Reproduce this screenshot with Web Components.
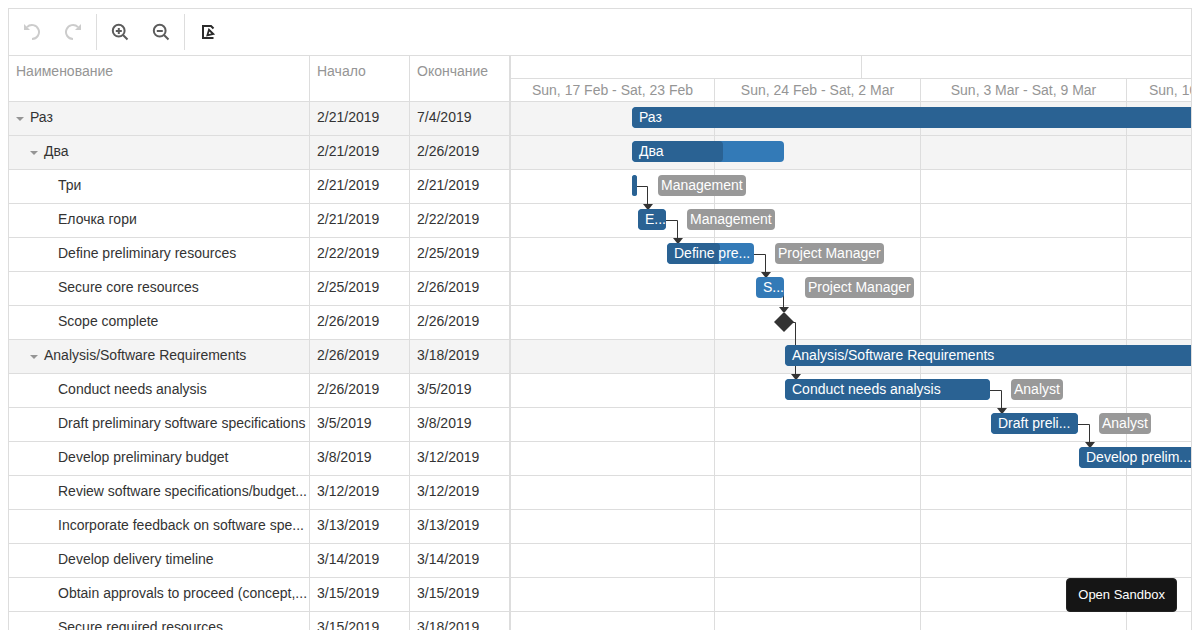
<!DOCTYPE html>
<html lang="ru">
<head>
<meta charset="utf-8">
<meta name="viewport" content="width=device-width, initial-scale=1">
<title>Gantt</title>
<style>
  html, body { height: 100%; margin: 0; }
  body {
    box-sizing: border-box;
    padding: 8px 8px 0;
    overflow: hidden;
    background: #fff;
    color: #333;
    font: 14px/18px "Liberation Sans", Arial, sans-serif;
    --line: #ddd;
    --muted: #959595;
    --row: 34px;
    --head: 46px;
    --group: #f4f4f4;
    --accent: #337ab7;
    --accent-done: #2a6293;
  }
</style>
</head>
<body>
<gantt-app></gantt-app>
<sandbox-button>Open Sandbox</sandbox-button>

<script>
const TASKS = [
  { name: 'Раз', level: 0, group: true, start: '2/21/2019', end: '7/4/2019', x: 121, w: 1200, done: 1200 },
  { name: 'Два', level: 1, group: true, start: '2/21/2019', end: '2/26/2019', x: 121, w: 152, done: 91 },
  { name: 'Три', level: 2, start: '2/21/2019', end: '2/21/2019', x: 121, w: 5, done: 5, label: '', who: 'Management', link: 'next' },
  { name: 'Елочка гори', level: 2, start: '2/21/2019', end: '2/22/2019', x: 127, w: 28, done: 28, label: 'Е...', who: 'Management', link: 'next' },
  { name: 'Define preliminary resources', level: 2, start: '2/22/2019', end: '2/25/2019', x: 156, w: 87, done: 53, label: 'Define pre...', who: 'Project Manager', link: 'next' },
  { name: 'Secure core resources', level: 2, start: '2/25/2019', end: '2/26/2019', x: 245, w: 28, done: 0, label: 'S...', who: 'Project Manager', link: 'down' },
  { name: 'Scope complete', level: 2, start: '2/26/2019', end: '2/26/2019', x: 263, w: 20, milestone: true, link: 'skip' },
  { name: 'Analysis/Software Requirements', level: 1, group: true, start: '2/26/2019', end: '3/18/2019', x: 274, w: 590, done: 590 },
  { name: 'Conduct needs analysis', level: 2, start: '2/26/2019', end: '3/5/2019', x: 274, w: 205, done: 205, who: 'Analyst', link: 'next' },
  { name: 'Draft preliminary software specifications', level: 2, start: '3/5/2019', end: '3/8/2019', x: 480, w: 87, done: 87, label: 'Draft preli...', who: 'Analyst', link: 'next' },
  { name: 'Develop preliminary budget', level: 2, start: '3/8/2019', end: '3/12/2019', x: 568, w: 118, done: 118, label: 'Develop prelim...' },
  { name: 'Review software specifications/budget...', level: 2, start: '3/12/2019', end: '3/12/2019' },
  { name: 'Incorporate feedback on software spe...', level: 2, start: '3/13/2019', end: '3/13/2019' },
  { name: 'Develop delivery timeline', level: 2, start: '3/14/2019', end: '3/14/2019' },
  { name: 'Obtain approvals to proceed (concept,...', level: 2, start: '3/15/2019', end: '3/15/2019' },
  { name: 'Secure required resources', level: 2, start: '3/15/2019', end: '3/18/2019' }
];
const ROW = 34;

class GanttApp extends HTMLElement {
  constructor() {
    super();
    this.attachShadow({ mode: 'open' }).innerHTML = `
      <style>
        :host { display: flex; flex-direction: column; height: 100%; box-sizing: border-box;
          border: 1px solid var(--line); border-bottom: 0; overflow: hidden; }
        main { display: flex; flex: 1; min-height: 0; overflow: hidden; }
        task-timeline { flex: 1; min-width: 0; }
      </style>
      <gantt-toolbar></gantt-toolbar>
      <main><task-list></task-list><task-timeline></task-timeline></main>`;
  }
}

class GanttToolbar extends HTMLElement {
  constructor() {
    super();
    this.attachShadow({ mode: 'open' }).innerHTML = `
      <style>
        :host { display: flex; align-items: center; gap: 5px; height: var(--head); padding: 0 5px;
          border-bottom: 1px solid var(--line); }
        hr { width: 1px; height: 36px; margin: 0; border: 0; background: var(--line); }
      </style>
      <tool-button label="Undo" off>
        <svg width="18" height="18" viewBox="0 0 18 18"><path d="M1 1v6h6z"/><path d="M4 4.100A7 7 0 1 1 9 16" fill="none" stroke="currentColor" stroke-width="2"/></svg>
      </tool-button>
      <tool-button label="Redo" off>
        <svg width="18" height="18" viewBox="0 0 18 18"><path d="M17 1v6h-6z"/><path d="M14 4.100A7 7 0 1 0 9 16" fill="none" stroke="currentColor" stroke-width="2"/></svg>
      </tool-button>
      <hr>
      <tool-button label="Zoom in">
        <svg width="18" height="18" viewBox="0 0 18 18"><g fill="none" stroke="currentColor" stroke-width="2"><circle cx="7.700" cy="7.700" r="5.900"/><path d="M12 12l4.500 4.500M4.800 8h6M7.800 5v6"/></g></svg>
      </tool-button>
      <tool-button label="Zoom out">
        <svg width="18" height="18" viewBox="0 0 18 18"><g fill="none" stroke="currentColor" stroke-width="2"><circle cx="7.700" cy="7.700" r="5.900"/><path d="M12 12l4.500 4.500M4.800 8h6"/></g></svg>
      </tool-button>
      <hr>
      <tool-button label="Task details" dark>
        <svg width="18" height="18" viewBox="0 0 18 18"><g fill="none" stroke="currentColor" stroke-width="2"><path d="M14.500 5.500L12 3H4v12h10.500"/><path d="M8.400 12.300L10 6.800l4.300 4.200z" stroke-width="1.800"/></g></svg>
      </tool-button>`;
  }
}

class ToolButton extends HTMLElement {
  constructor() {
    super();
    this.attachShadow({ mode: 'open' }).innerHTML = `
      <style>
        :host { display: block; color: #5c5c5c; }
        :host([dark]) { color: #2b2b2b; }
        :host([off]) { color: #ccc; }
        button { display: grid; place-items: center; width: 36px; height: 36px; padding: 0;
          border: 0; background: none; color: inherit; }
        ::slotted(svg) { display: block; fill: currentColor; }
      </style>
      <button type="button"><slot></slot></button>`;
  }
  connectedCallback() {
    const b = this.shadowRoot.querySelector('button');
    b.setAttribute('aria-label', this.getAttribute('label'));
    b.disabled = this.hasAttribute('off');
  }
}

class TaskList extends HTMLElement {
  constructor() {
    super();
    const rows = TASKS.map(t => `
      <tr class="${t.group ? 'group' : ''}">
        <td><div class="name l${t.level}"><span class="mark">${t.group
          ? '<svg width="8" height="4" viewBox="0 0 8 4"><path d="M0 0h8L4 4z"/></svg>' : ''}</span>${t.name}</div></td>
        <td>${t.start}</td><td>${t.end}</td>
      </tr>`).join('');
    this.attachShadow({ mode: 'open' }).innerHTML = `
      <style>
        :host { display: block; flex: none; border-right: 1px solid var(--line); }
        table { width: 501px; table-layout: fixed; border-collapse: separate; border-spacing: 0; }
        .c1 { width: 301px; }
        th, td { box-sizing: border-box; padding: 0 0 3px 7px; border: solid var(--line); border-width: 0 1px 1px 0;
          text-align: left; white-space: nowrap; overflow: hidden; }
        th { height: var(--head); padding-top: 6px; vertical-align: top; color: var(--muted); font-weight: 400; }
        td { height: var(--row); }
        .group { background: var(--group); }
        .name { display: flex; align-items: center; }
        .l1 { padding-left: 14px; }
        .l2 { padding-left: 28px; }
        .mark { flex: none; width: 14px; padding-top: 4px; }
        svg { display: block; fill: var(--muted); }
      </style>
      <table>
        <colgroup><col class="c1"><col><col></colgroup>
        <thead><tr><th>Наименование</th><th>Начало</th><th>Окончание</th></tr></thead>
        <tbody>${rows}</tbody>
      </table>`;
  }
}

class TaskBar extends HTMLElement {
  constructor() {
    super();
    this.attachShadow({ mode: 'open' }).innerHTML = `
      <style>
        :host { display: block; flex: none; box-sizing: border-box; height: 21px; border-radius: 4px;
          overflow: hidden; background: var(--accent); color: #fff; line-height: 20px; white-space: nowrap; }
        .bar { width: var(--done); height: 100%; border-radius: 4px; background: var(--accent-done); }
        span { display: block; width: max-content; padding-left: 7px; }
      </style>
      <div class="bar"><span><slot></slot></span></div>`;
  }
}

class ResourceTag extends HTMLElement {
  constructor() {
    super();
    this.attachShadow({ mode: 'open' }).innerHTML = `
      <style>
        :host { display: block; flex: none; height: 21px; margin-left: 21px; padding: 0 3px; border-radius: 4px;
          background: #999; color: #fff; line-height: 20px; white-space: nowrap; }
      </style>
      <slot></slot>`;
  }
}

class TaskTimeline extends HTMLElement {
  constructor() {
    super();
    const rows = TASKS.map(t => {
      let inner = '';
      if (t.milestone) {
        inner = `<svg class="stone" style="margin-left:${t.x}px" width="20" height="20" viewBox="0 0 20 20"><path d="M10 0L20 10L10 20L0 10z"/></svg>`;
      } else if (t.w) {
        inner = `<task-bar title="${t.name}" style="margin-left:${t.x}px;width:${t.w}px;--done:${t.done}px">${t.label ?? t.name}</task-bar>`;
      }
      return `<div class="row${t.group ? ' group' : ''}">${inner}${t.who ? `<resource-tag>${t.who}</resource-tag>` : ''}</div>`;
    }).join('');
    // Dependency arrows: out of the right end of a bar, then down onto the next one.
    const links = TASKS.map((t, i) => {
      if (!t.link) return '';
      const right = t.x + t.w, y = i * ROW + 16;
      const x = { next: right + (t.w < 10 ? 11 : 12), down: right, skip: right + 2 }[t.link];
      const tip = (i + (t.link === 'skip' ? 2 : 1)) * ROW + (t.link === 'down' ? 6 : 5);
      return `<path class="wire" d="M${right - 1} ${y + .5}H${x - .5}V${tip - 3}"/><path d="M${x - 5} ${tip - 5}h10l-4 5h-2z"/>`;
    }).join('');
    this.attachShadow({ mode: 'open' }).innerHTML = `
      <style>
        :host { display: block; overflow: hidden; }
        .scale { display: grid; height: 22px; border-bottom: 1px solid var(--line); color: var(--muted);
          line-height: 22px; text-align: center; white-space: nowrap; }
        .scale > *, .grid > * { box-sizing: border-box; border-right: 1px solid var(--line); }
        .months { grid-template-columns: 351px 860px; }
        .weeks, .grid { grid-template-columns: 204px 206px 206px 206px; }
        .chart { position: relative; }
        .row { display: flex; align-items: flex-start; box-sizing: border-box; height: var(--row);
          padding-top: 5px; border-bottom: 1px solid var(--line); }
        .group { background: var(--group); }
        .grid { position: absolute; inset: 0; display: grid; }
        .links { position: absolute; inset: 0; width: 100%; height: 100%; fill: #333; }
        .wire { fill: none; stroke: #333; }
        task-bar, resource-tag, .stone { position: relative; z-index: 1; }
        .stone { flex: none; margin-top: 1px; fill: #333; }
      </style>
      <div class="scale months"><span></span><span></span></div>
      <div class="scale weeks">
        <span>Sun, 17 Feb - Sat, 23 Feb</span><span>Sun, 24 Feb - Sat, 2 Mar</span>
        <span>Sun, 3 Mar - Sat, 9 Mar</span><span>Sun, 10 Mar - Sat, 16 Mar</span>
      </div>
      <div class="chart">
        ${rows}
        <div class="grid"><i></i><i></i><i></i><i></i></div>
        <svg class="links" aria-hidden="true">${links}</svg>
      </div>`;
  }
}

class SandboxButton extends HTMLElement {
  constructor() {
    super();
    this.attachShadow({ mode: 'open' }).innerHTML = `
      <style>
        :host { display: block; position: fixed; right: 23px; bottom: 18px; z-index: 2; }
        button { display: block; height: 34px; padding: 0 11px; border: 1px solid #222; border-radius: 4px;
          background: #151515; color: #fff; font: 13px/16px "Liberation Sans", Arial, sans-serif; white-space: nowrap; }
      </style>
      <button type="button"><slot></slot></button>`;
  }
}

customElements.define('tool-button', ToolButton);
customElements.define('task-bar', TaskBar);
customElements.define('resource-tag', ResourceTag);
customElements.define('gantt-toolbar', GanttToolbar);
customElements.define('task-list', TaskList);
customElements.define('task-timeline', TaskTimeline);
customElements.define('gantt-app', GanttApp);
customElements.define('sandbox-button', SandboxButton);
</script>
</body>
</html>
